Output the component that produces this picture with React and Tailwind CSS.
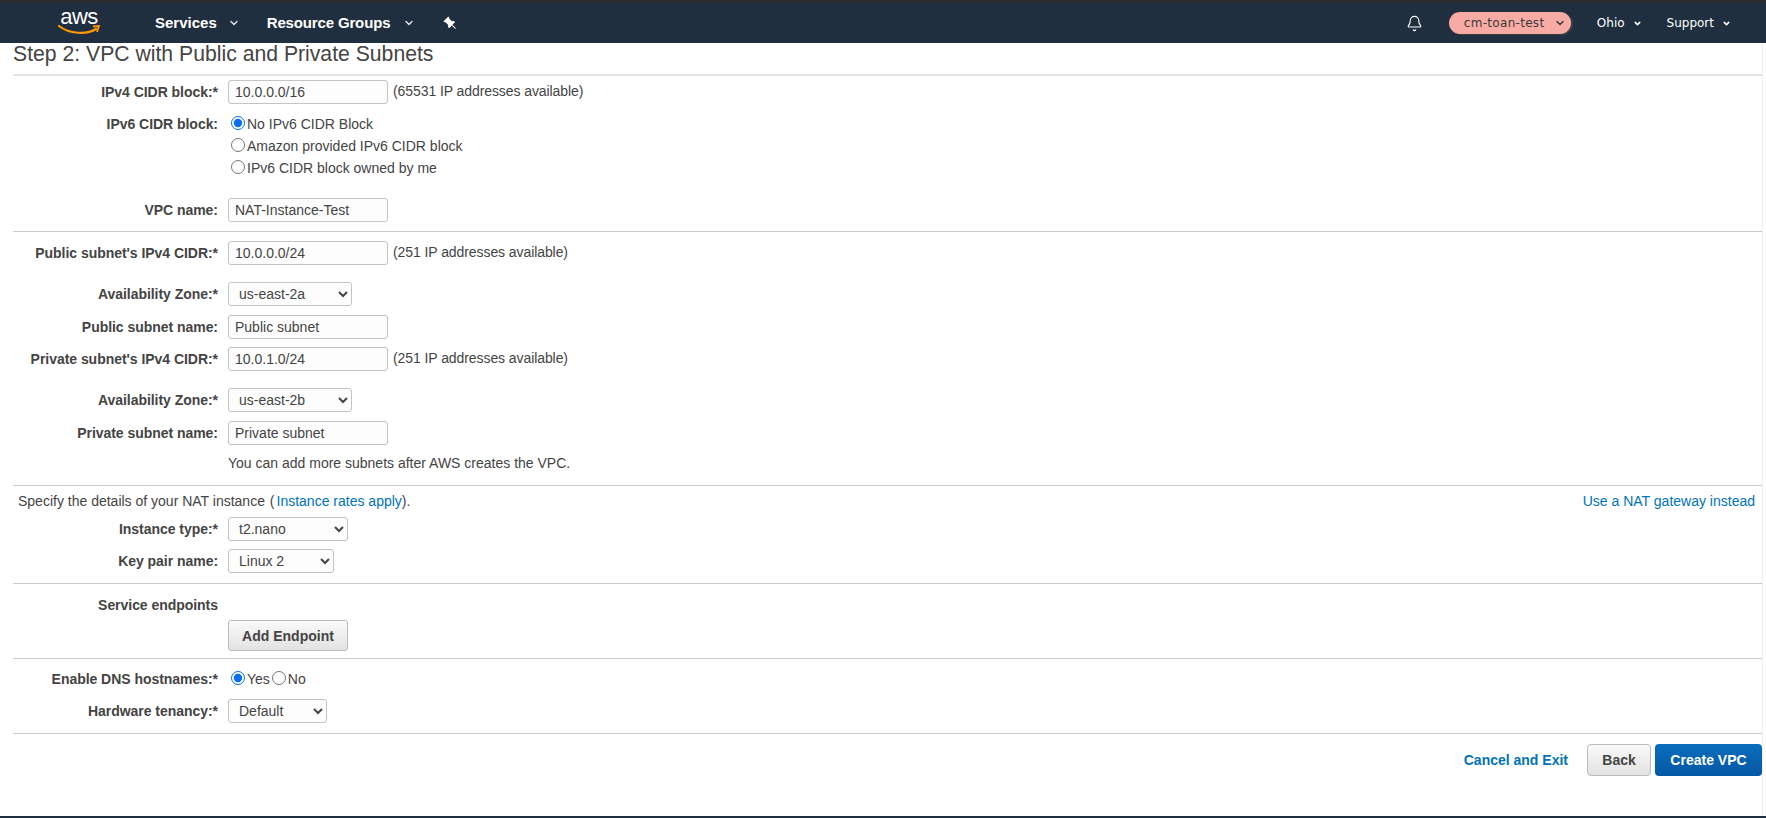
import { Bell, ChevronDown } from 'lucide-react';
import { BsPinAngleFill } from 'react-icons/bs';

const SANS = "font-['Liberation_Sans',Arial,sans-serif]";
const NAV = "font-['DejaVu_Sans',Verdana,sans-serif]";

function Row({ label, className = '', children }) {
  return (
    <div className={`flex items-center h-6 ${className}`}>
      <div className="w-[205px] shrink-0 text-right font-bold text-[#444] tracking-[-0.04px]">{label}</div>
      <div className="ml-[10px] flex items-center">{children}</div>
    </div>
  );
}

function TextBox({ value, note }) {
  return (
    <>
      <input
        readOnly
        defaultValue={value}
        className="w-[160px] h-6 px-[6px] rounded-[3px] border border-[#c4c4c4] bg-[#fdfdfd] text-[#444] text-sm outline-none"
      />
      {note && <span className="ml-[5px] -mt-[2px] text-[#444] tracking-[-0.08px]">{note}</span>}
    </>
  );
}

function Picker({ value, width }) {
  return (
    <select
      defaultValue={value}
      className={`${width} h-6 pl-[6px] rounded-[3px] border border-[#c4c4c4] bg-[#fdfdfd] text-[#444] text-sm`}
    >
      <option>{value}</option>
    </select>
  );
}

function Radio({ checked, name }) {
  return (
    <input
      type="radio"
      name={name}
      defaultChecked={checked}
      className="w-[14px] h-[14px] m-0 -translate-y-[1px] accent-[#0a6ff0]"
    />
  );
}

export default function App() {
  return (
    <div className={`${SANS} text-sm h-[818px] overflow-hidden bg-white flex flex-col`}>
      {/* Top nav */}
      <div className="h-[43px] shrink-0 border-t-[3px] border-[#2c2c2e] bg-[#202f3f] flex items-center text-white">
        <div className="ml-[58px] w-[42px] relative h-[30px] -mt-[4px]">
          <span className={`${SANS} block text-center text-[22px] leading-[22px] tracking-[-0.5px]`}>aws</span>
          <svg className="absolute left-0 top-[18px]" width="43" height="12" viewBox="0 0 43 12" fill="none">
            <path d="M1 2c10 8 28 9 37 3" stroke="#f90" strokeWidth="2.2" strokeLinecap="round" />
            <path d="M35 2.5l6-.5-2 6" stroke="#f90" strokeWidth="1.8" fill="none" />
          </svg>
        </div>
        <span className="ml-[55px] font-bold text-[15px]">Services</span>
        <ChevronDown size={12} strokeWidth={3} className="ml-[11px] text-[#ddd]" />
        <span className="ml-[27px] font-bold text-[15px] tracking-[-0.15px]">Resource Groups</span>
        <ChevronDown size={12} strokeWidth={3} className="ml-[13px] text-[#ddd]" />
        <BsPinAngleFill size={14} className="ml-[28px] -scale-x-100" />
        <div className="ml-auto flex items-center">
          <Bell size={17} strokeWidth={1.6} />
          <div className="ml-[26px] w-[122px] h-[22px] rounded-full bg-[#f8aba5] shadow-[2px_1px_0_#3b3f44] flex items-center pl-[15px] text-[#3a3a3a]">
            <span className={`${NAV} text-xs tracking-[0.3px]`}>cm-toan-test</span>
            <ChevronDown size={12} strokeWidth={3} className="ml-auto mr-[5px]" />
          </div>
          <span className={`${NAV} ml-[26px] text-xs`}>Ohio</span>
          <ChevronDown size={9} strokeWidth={4} className="ml-[8px]" />
          <span className={`${NAV} ml-[25px] text-xs`}>Support</span>
          <ChevronDown size={9} strokeWidth={4} className="ml-[8px] mr-[35px]" />
        </div>
      </div>

      {/* Page body */}
      <div className="flex-1 ml-[13px] mr-[3px] border-r border-[#eee] flex flex-col">
        <h1 className="h-[33px] shrink-0 text-[21.2px] leading-[22px] text-[#444] border-b-2 border-[#e4e4e4]">
          Step 2: VPC with Public and Private Subnets
        </h1>

        <section className="h-[156px] shrink-0 border-b border-[#ccc]">
          <Row label="IPv4 CIDR block:*" className="mt-[4px]">
            <TextBox value="10.0.0.0/16" note="(65531 IP addresses available)" />
          </Row>
          <div className="flex mt-[9px]">
            <div className="w-[205px] h-[22px] leading-[22px] text-right font-bold text-[#444] tracking-[-0.04px]">IPv6 CIDR block:</div>
            <div className="ml-[13px] text-[#444]">
              <label className="flex items-center h-[22px]"><Radio name="v6" checked /><span className="ml-[2px]">No IPv6 CIDR Block</span></label>
              <label className="flex items-center h-[22px]"><Radio name="v6" /><span className="ml-[2px]">Amazon provided IPv6 CIDR block</span></label>
              <label className="flex items-center h-[22px]"><Radio name="v6" /><span className="ml-[2px]">IPv6 CIDR block owned by me</span></label>
            </div>
          </div>
          <Row label="VPC name:" className="mt-[19px]"><TextBox value="NAT-Instance-Test" /></Row>
        </section>

        <section className="h-[254px] shrink-0 border-b border-[#ccc]">
          <Row label="Public subnet's IPv4 CIDR:*" className="mt-[9px]">
            <TextBox value="10.0.0.0/24" note="(251 IP addresses available)" />
          </Row>
          <Row label="Availability Zone:*" className="mt-[17px]"><Picker value="us-east-2a" width="w-[124px]" /></Row>
          <Row label="Public subnet name:" className="mt-[9px]"><TextBox value="Public subnet" /></Row>
          <Row label="Private subnet's IPv4 CIDR:*" className="mt-[8px]">
            <TextBox value="10.0.1.0/24" note="(251 IP addresses available)" />
          </Row>
          <Row label="Availability Zone:*" className="mt-[17px]"><Picker value="us-east-2b" width="w-[124px]" /></Row>
          <Row label="Private subnet name:" className="mt-[9px]"><TextBox value="Private subnet" /></Row>
          <p className="ml-[215px] mt-[8px] h-5 leading-5 text-[#444]">You can add more subnets after AWS creates the VPC.</p>
        </section>

        <section className="h-[98px] shrink-0 border-b border-[#ccc]">
          <div className="flex justify-between pl-[5px] pr-[7px] mt-[5px] h-5 leading-5">
            <span className="text-[#444]">
              Specify the details of your NAT instance <span className="ml-[1px]">(</span><a className="ml-[2px] text-[#0073bb]">Instance rates apply</a>).
            </span>
            <a className="text-[#0073bb]">Use a NAT gateway instead</a>
          </div>
          <Row label="Instance type:*" className="mt-[6px]"><Picker value="t2.nano" width="w-[120px]" /></Row>
          <Row label="Key pair name:" className="mt-[8px]"><Picker value="Linux 2" width="w-[106px]" /></Row>
        </section>

        <section className="h-[75px] shrink-0 border-b border-[#ccc]">
          <div className="w-[205px] mt-[11px] h-5 leading-5 text-right font-bold text-[#444] tracking-[-0.04px]">Service endpoints</div>
          <button className="block ml-[215px] mt-[5px] w-[120px] h-[31px] rounded-[3px] border border-[#bbb] bg-gradient-to-b from-[#fafafa] to-[#e2e2e2] font-bold text-[#444]">
            Add Endpoint
          </button>
        </section>

        <section className="h-[75px] shrink-0 border-b border-[#ccc]">
          <Row label="Enable DNS hostnames:*" className="mt-[8px]">
            <label className="flex items-center ml-[3px] text-[#444]">
              <Radio name="dns" checked /><span className="ml-[2px]">Yes</span>
            </label>
            <label className="flex items-center ml-[2px] text-[#444]">
              <Radio name="dns" /><span className="ml-[2px]">No</span>
            </label>
          </Row>
          <Row label="Hardware tenancy:*" className="mt-[8px]"><Picker value="Default" width="w-[99px]" /></Row>
        </section>

        {/* Footer actions */}
        <div className="mt-[10px] flex items-center justify-end font-bold">
          <a className="text-[#0073bb] mr-[19px]">Cancel and Exit</a>
          <button className="w-[64px] h-[32px] rounded-[4px] border border-[#bbb] bg-gradient-to-b from-[#fafafa] to-[#e2e2e2] text-[#444]">Back</button>
          <button className="ml-[4px] w-[107px] h-[32px] rounded-[4px] bg-gradient-to-b from-[#0a6ebd] to-[#0558a5] text-white">Create VPC</button>
        </div>
      </div>
      <div className="h-[2px] shrink-0 bg-[#202f3f]" />
    </div>
  );
}
